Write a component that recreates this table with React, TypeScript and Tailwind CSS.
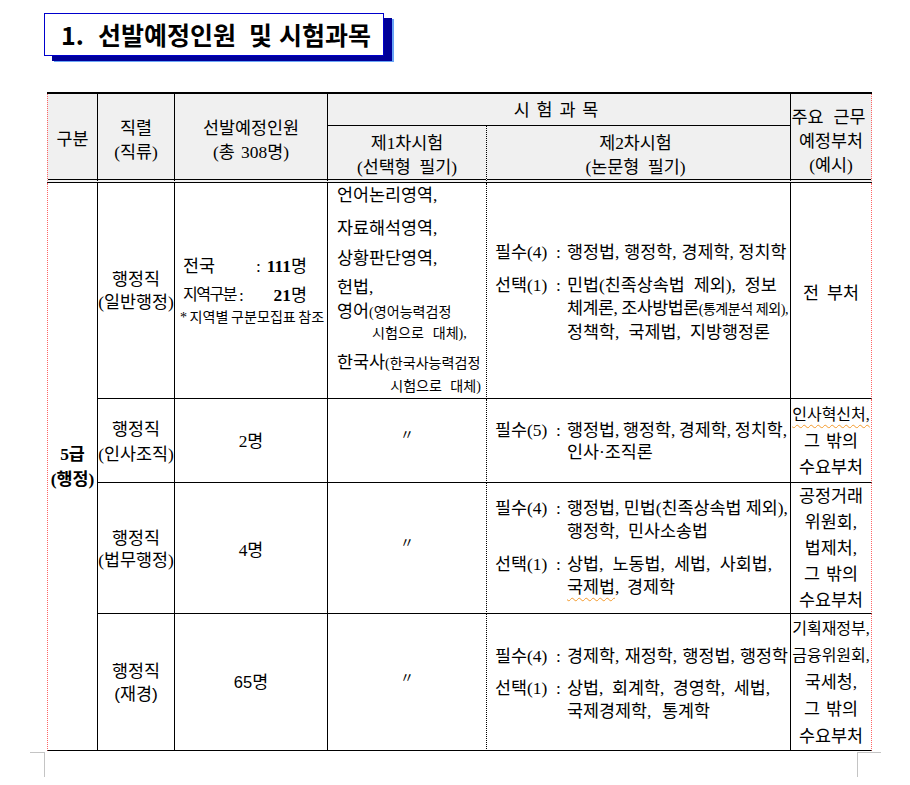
import React from "react";

function Entry({
  label,
  className,
  children,
}: {
  label: string;
  className?: string;
  children: React.ReactNode;
}) {
  return (
    <div className={className}>
      <div className="flex">
        <div className="w-[61px] shrink-0 whitespace-nowrap">{label}</div>
        <div className="w-[11px] shrink-0">:</div>
        <div className="flex flex-col whitespace-nowrap">{children}</div>
      </div>
    </div>
  );
}

export default function App() {
  return (
    <div className="h-[785px] w-[910px] overflow-hidden bg-white text-black [font-family:'Liberation_Serif','Noto_Sans_CJK_KR',serif]">
      {/* Title */}
      <div className="pl-[44px] pt-[13px]">
        <div className="flex h-[43px] w-[340px] items-center whitespace-nowrap border border-[#0000cc] bg-white pl-[16px] text-[25px] font-bold leading-none shadow-[8px_5px_0_0_#000099,10px_6px_0_0_#6aa6f6] [font-family:'Noto_Sans_CJK_KR',sans-serif]">
          <span>1.</span>
          <span className="ml-[14px]">선발예정인원</span>
          <span className="ml-[13px]">및</span>
          <span className="ml-[7px]">시험과목</span>
        </div>
      </div>

      {/* Table */}
      <div className="ml-[47px] mt-[36px] grid w-[825px] grid-cols-[51px_77px_153px_159px_304px_81px] grid-rows-[32px_57px_216px_84px_131px_137px] border-t-2 border-black text-[17.4px] leading-[24px]">
        {/* Header */}
        <div className="col-start-1 row-span-2 row-start-1 flex items-center justify-center border-b-4 border-l border-r border-l-[#ff6464] bg-[#f0f0f0] pt-[4px] [border-bottom-style:double] [border-left-style:dotted]">
          구분
        </div>
        <div className="col-start-2 row-span-2 row-start-1 flex flex-col items-center justify-center whitespace-nowrap border-b-4 border-r bg-[#f0f0f0] pt-[7px] [border-bottom-style:double]">
          <div>직렬</div>
          <div>(직류)</div>
        </div>
        <div className="col-start-3 row-span-2 row-start-1 flex flex-col items-center justify-center whitespace-nowrap border-b-4 border-r bg-[#f0f0f0] pt-[7px] [border-bottom-style:double]">
          <div>선발예정인원</div>
          <div className="[word-spacing:2px]">(총 308명)</div>
        </div>
        <div className="col-span-2 col-start-4 row-start-1 flex items-center justify-center whitespace-nowrap border-b border-r bg-[#f0f0f0] pr-[6px] [word-spacing:2.5px]">
          시 험 과 목
        </div>
        <div className="col-start-6 row-span-2 row-start-1 flex flex-col items-center justify-center whitespace-nowrap border-b-4 border-r border-r-[#ff6464] bg-[#f0f0f0] pt-[9px] [border-bottom-style:double] [border-right-style:dotted]">
          <div className="-ml-[5px] [word-spacing:5.5px]">주요 근무</div>
          <div>예정부처</div>
          <div>(예시)</div>
        </div>
        <div className="col-start-4 row-start-2 flex flex-col items-center justify-center whitespace-nowrap border-b-4 border-r bg-[#f0f0f0] pt-[5px] [border-bottom-style:double] [border-right-style:dotted]">
          <div>제1차시험</div>
          <div className="[word-spacing:4px]">(선택형 필기)</div>
        </div>
        <div className="col-start-5 row-start-2 flex flex-col items-center justify-center whitespace-nowrap border-b-4 border-r bg-[#f0f0f0] pr-[6px] pt-[5px] [border-bottom-style:double]">
          <div>제2차시험</div>
          <div className="[word-spacing:4px]">(논문형 필기)</div>
        </div>

        {/* 5급 (행정) */}
        <div className="col-start-1 row-span-4 row-start-3 flex flex-col items-center justify-center whitespace-nowrap border-b border-l border-r border-l-[#ff6464] font-bold leading-[25px] [border-left-style:dotted]">
          <div>5급</div>
          <div>(행정)</div>
        </div>

        {/* Row 1 */}
        <div className="col-start-2 row-start-3 flex flex-col items-center justify-center whitespace-nowrap border-b border-r leading-[23px]">
          <div>행정직</div>
          <div>(일반행정)</div>
        </div>
        <div className="col-start-3 row-start-3 flex flex-col justify-center whitespace-nowrap border-b border-r pl-[8px]">
          <div className="flex h-[24px] w-[124px]">
            <span>전국</span>
            <span className="ml-[41px]">:</span>
            <span className="ml-auto">
              <span className="font-bold">111</span>명
            </span>
          </div>
          <div className="mt-[5px] flex h-[24px] w-[124px]">
            <span className="text-[16px] tracking-[-1.5px]">지역구분</span>
            <span className="ml-[3px]">:</span>
            <span className="ml-auto">
              <span className="font-bold">21</span>명
            </span>
          </div>
          <div className="-ml-[3px] h-[20px] text-[14.1px] leading-[20px] [word-spacing:-1px]">* 지역별 구분모집표 참조</div>
        </div>
        <div className="col-start-4 row-start-3 flex flex-col whitespace-nowrap border-b border-r pl-[9px] pr-[5px] [border-right-style:dotted]">
          <div className="h-[24px]">언어논리영역,</div>
          <div className="mt-[9px] h-[24px]">자료해석영역,</div>
          <div className="mt-[6px] h-[24px]">상황판단영역,</div>
          <div className="mt-[5px] h-[24px]">헌법,</div>
          <div className="mt-[1px] h-[22px] leading-[22px]">
            영어<span className="text-[14.1px]">(영어능력검정</span>
          </div>
          <div className="h-[22px] pl-[35px] text-[14.1px] leading-[22px] [word-spacing:5.3px]">시험으로 대체),</div>
          <div className="mt-[6px] h-[24px]">
            한국사<span className="text-[14.1px]">(한국사능력검정</span>
          </div>
          <div className="h-[24px] text-right text-[14.1px] [word-spacing:4.8px]">시험으로 대체)</div>
        </div>
        <div className="col-start-5 row-start-3 flex flex-col justify-center whitespace-nowrap border-b border-r pl-[8px] pt-[3px] leading-[23px]">
          <Entry label="필수(4)">
            <div className="[word-spacing:0.5px]">행정법, 행정학, 경제학, 정치학</div>
          </Entry>
          <Entry label="선택(1)" className="mt-[10px]">
            <div className="[word-spacing:4.6px]">민법(친족상속법 제외), 정보</div>
            <div className="tracking-[-0.5px]">
              체계론, 조사방법론<span className="text-[14.1px]">(통계분석 제외),</span>
            </div>
            <div className="[word-spacing:4.8px]">정책학, 국제법, 지방행정론</div>
          </Entry>
        </div>
        <div className="col-start-6 row-start-3 flex items-center justify-center whitespace-nowrap border-b border-r border-r-[#ff6464] pt-[4px] [border-right-style:dotted] [word-spacing:3.5px]">
          전 부처
        </div>

        {/* Row 2 */}
        <div className="col-start-2 row-start-4 flex flex-col items-center justify-center whitespace-nowrap border-b border-r pt-[2px] leading-[25px]">
          <div>행정직</div>
          <div>(인사조직)</div>
        </div>
        <div className="col-start-3 row-start-4 flex items-center justify-center border-b border-r">2명</div>
        <div className="col-start-4 row-start-4 flex items-center justify-center border-b border-r leading-none [border-right-style:dotted]">
          <span className="-mt-[15px] text-[14px] [font-family:'Noto_Sans_CJK_KR',sans-serif]">〃</span>
        </div>
        <div className="col-start-5 row-start-4 flex flex-col justify-center whitespace-nowrap border-b border-r pl-[8px] leading-[22px]">
          <Entry label="필수(5)">
            <div className="[word-spacing:-0.8px]">행정법, 행정학, 경제학, 정치학,</div>
            <div>인사·조직론</div>
          </Entry>
        </div>
        <div className="col-start-6 row-start-4 flex flex-col items-center justify-center whitespace-nowrap border-b border-r border-r-[#ff6464] leading-[26px] [border-right-style:dotted]">
          <div className="text-[16px] underline decoration-[#f39a2b] decoration-wavy decoration-1 underline-offset-[4px]">인사혁신처,</div>
          <div className="[word-spacing:1.5px]">그 밖의</div>
          <div>수요부처</div>
        </div>

        {/* Row 3 */}
        <div className="col-start-2 row-start-5 flex flex-col items-center justify-center whitespace-nowrap border-b border-r pt-[2px] leading-[22px]">
          <div>행정직</div>
          <div>(법무행정)</div>
        </div>
        <div className="col-start-3 row-start-5 flex items-center justify-center border-b border-r pt-[4px]">4명</div>
        <div className="col-start-4 row-start-5 flex items-center justify-center border-b border-r leading-none [border-right-style:dotted]">
          <span className="-mt-[14px] text-[14px] [font-family:'Noto_Sans_CJK_KR',sans-serif]">〃</span>
        </div>
        <div className="col-start-5 row-start-5 flex flex-col justify-center whitespace-nowrap border-b border-r pl-[8px] leading-[23px]">
          <Entry label="필수(4)">
            <div>행정법, 민법(친족상속법 제외),</div>
            <div className="[word-spacing:4.3px]">행정학, 민사소송법</div>
          </Entry>
          <Entry label="선택(1)" className="mt-[10px]">
            <div className="[word-spacing:4.85px]">상법, 노동법, 세법, 사회법,</div>
            <div className="[word-spacing:3.3px]">
              <span className="underline decoration-[#f39a2b] decoration-wavy decoration-1 underline-offset-[4px]">국제법</span>, 경제학
            </div>
          </Entry>
        </div>
        <div className="col-start-6 row-start-5 flex flex-col items-center justify-center whitespace-nowrap border-b border-r border-r-[#ff6464] leading-[26px] [border-right-style:dotted]">
          <div>공정거래</div>
          <div>위원회,</div>
          <div>법제처,</div>
          <div className="[word-spacing:1.5px]">그 밖의</div>
          <div>수요부처</div>
        </div>

        {/* Row 4 */}
        <div className="col-start-2 row-start-6 flex flex-col items-center justify-center whitespace-nowrap border-b border-r pt-[2px] leading-[23px] [font-family:'Liberation_Sans','Noto_Sans_CJK_KR',sans-serif]">
          <div>행정직</div>
          <div>(재경)</div>
        </div>
        <div className="col-start-3 row-start-6 flex items-center justify-center border-b border-r [font-family:'Liberation_Sans','Noto_Sans_CJK_KR',sans-serif]">
          <span>
            <span className="text-[16.5px]">65</span>명
          </span>
        </div>
        <div className="col-start-4 row-start-6 flex items-center justify-center border-b border-r leading-none [border-right-style:dotted]">
          <span className="-mt-[13px] text-[14px] [font-family:'Noto_Sans_CJK_KR',sans-serif]">〃</span>
        </div>
        <div className="col-start-5 row-start-6 flex flex-col justify-center whitespace-nowrap border-b border-r pl-[8px] pt-[4px] leading-[23px]">
          <Entry label="필수(4)">
            <div className="[word-spacing:1px]">경제학, 재정학, 행정법, 행정학</div>
          </Entry>
          <Entry label="선택(1)" className="mt-[9px]">
            <div className="[word-spacing:4.2px]">상법, 회계학, 경영학, 세법,</div>
            <div className="[word-spacing:6.3px]">국제경제학, 통계학</div>
          </Entry>
        </div>
        <div className="col-start-6 row-start-6 flex flex-col items-center justify-center whitespace-nowrap border-b border-r border-r-[#ff6464] leading-[27px] [border-right-style:dotted]">
          <div className="text-[16px]">기획재정부,</div>
          <div className="text-[16px]">금융위원회,</div>
          <div>국세청,</div>
          <div className="[word-spacing:1.5px]">그 밖의</div>
          <div>수요부처</div>
        </div>
      </div>

      {/* page corner marks */}
      <div className="mt-[1px] flex h-[25px]">
        <div className="ml-[30px] h-[25px] w-[15px] border-r border-t border-[#c4c4c4]" />
        <div className="ml-[812px] h-[25px] w-[24px] border-l border-t border-[#c4c4c4]" />
      </div>
    </div>
  );
}
